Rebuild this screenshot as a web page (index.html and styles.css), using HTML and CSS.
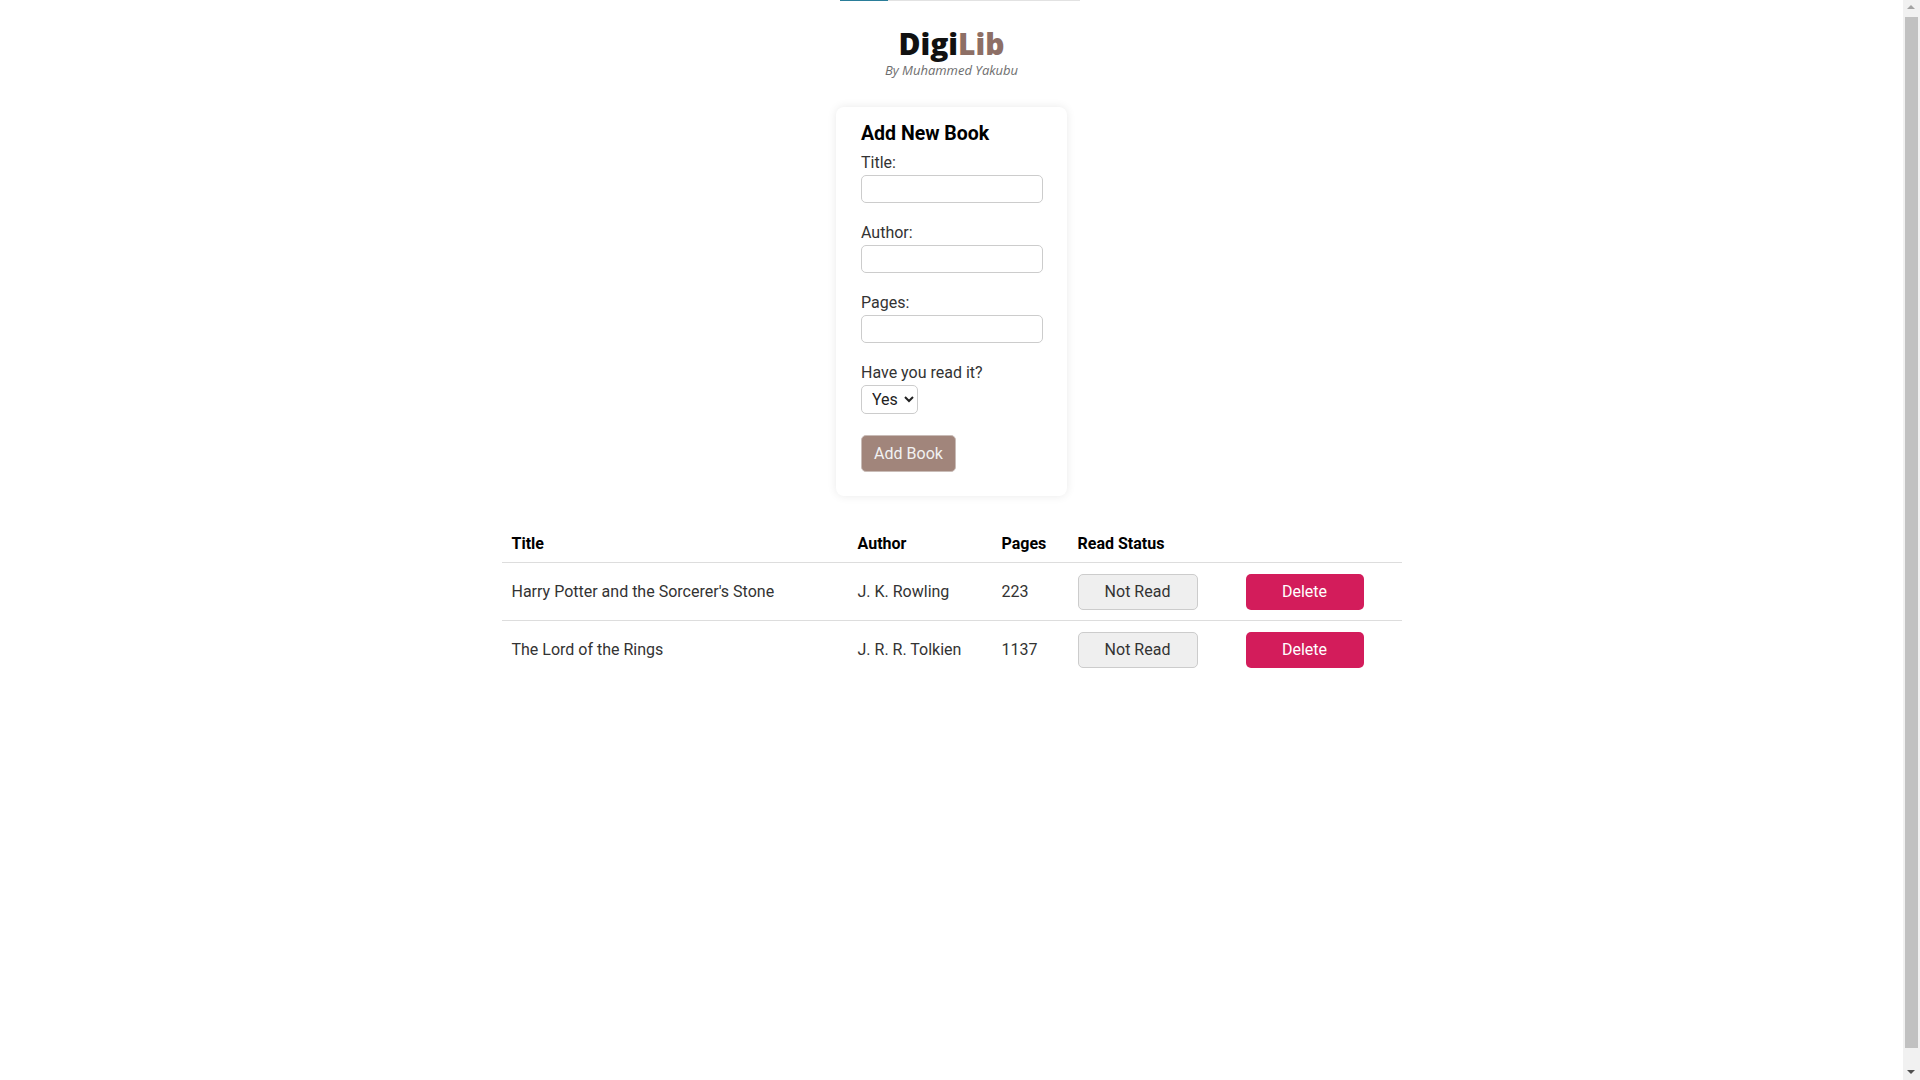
FILE: index.html
```html
<!DOCTYPE html>
<html lang="en">
<head>
<meta charset="utf-8">
<title>DigiLib</title>
<link rel="stylesheet" href="styles.css">
</head>
<body>
<div class="loader"><span class="loader-fill"></span></div>
<header class="site-header">
  <h1 class="logo">Digi<span class="logo-accent">Lib</span></h1>
  <p class="byline">By Muhammed Yakubu</p>
</header>
<main class="main">
  <form class="card">
    <h2 class="card-title">Add New Book</h2>
    <div class="field">
      <label class="label" for="title">Title:</label>
      <input class="input" id="title" type="text">
    </div>
    <div class="field">
      <label class="label" for="author">Author:</label>
      <input class="input" id="author" type="text">
    </div>
    <div class="field">
      <label class="label" for="pages">Pages:</label>
      <input class="input" id="pages" type="text">
    </div>
    <div class="field field-last">
      <label class="label" for="read">Have you read it?</label>
      <select class="select" id="read"><option>Yes</option><option>No</option></select>
    </div>
    <button class="btn-add" type="button">Add Book</button>
  </form>
  <table class="books">
    <colgroup>
      <col class="c-title"><col class="c-author"><col class="c-pages"><col class="c-status"><col class="c-action">
    </colgroup>
    <thead>
      <tr><th>Title</th><th>Author</th><th>Pages</th><th>Read Status</th><th></th></tr>
    </thead>
    <tbody>
      <tr>
        <td>Harry Potter and the Sorcerer's Stone</td>
        <td>J. K. Rowling</td>
        <td>223</td>
        <td><button class="btn-status" type="button">Not Read</button></td>
        <td><button class="btn-delete" type="button">Delete</button></td>
      </tr>
      <tr>
        <td>The Lord of the Rings</td>
        <td>J. R. R. Tolkien</td>
        <td>1137</td>
        <td><button class="btn-status" type="button">Not Read</button></td>
        <td><button class="btn-delete" type="button">Delete</button></td>
      </tr>
    </tbody>
  </table>
</main>
<div class="scrollbar" aria-hidden="true">
  <span class="sb-arrow sb-up"></span>
  <span class="sb-thumb"></span>
  <span class="sb-arrow sb-down"></span>
</div>
</body>
</html>
```
FILE: styles.css
```css
html { background: #fff; }
body {
  margin: 8px 25px 8px 8px;
  min-height: 100vh;
  font-family: Roboto, "Liberation Sans", sans-serif;
  font-size: 16px;
  color: #333;
  background: #fff;
}
.loader {
  position: absolute;
  top: 0;
  left: 840px;
  width: 240px;
  height: 1px;
  background: #e2e2e2;
}
.loader-fill {
  display: block;
  width: 48px;
  height: 100%;
  background: #2a7d99;
}
.site-header {
  padding-top: 18px;
  text-align: center;
}
.logo {
  margin: 0;
  font-family: "Open Sans", sans-serif;
  font-weight: 800;
  font-size: 30px;
  line-height: 36px;
  color: #111;
}
.logo-accent { color: #8d6f66; }
.byline {
  margin: 0;
  font-family: "Open Sans", sans-serif;
  font-style: italic;
  font-size: 13px;
  line-height: 16px;
  color: #6e6e6e;
}
.main {
  display: flex;
  flex-direction: column;
  align-items: center;
  margin-top: 29px;
}
.card {
  display: flex;
  flex-direction: column;
  width: 182px;
  padding: 15px 24px 24px 25px;
  background: #fff;
  border-radius: 8px;
  box-shadow: 0 0 10px rgba(0, 0, 0, 0.09);
}
.card-title {
  margin: 0 0 8px;
  font-size: 19.5px;
  line-height: 23px;
  font-weight: 700;
  color: #000;
}
.field {
  display: flex;
  flex-direction: column;
  align-items: flex-start;
  gap: 2px;
  margin-bottom: 20px;
}
.field-last { margin-bottom: 21px; }
.label {
  line-height: 20px;
  color: #333;
}
.input {
  box-sizing: border-box;
  width: 182px;
  height: 28px;
  border: 1px solid #ccc;
  border-radius: 5px;
  padding: 0 6px;
  font: inherit;
}
.select {
  box-sizing: border-box;
  width: 57px;
  height: 29px;
  border: 1px solid #ccc;
  border-radius: 5px;
  background: #fff;
  font: inherit;
  color: #222;
  padding: 0 2px 0 6px;
}
.btn-add {
  align-self: flex-start;
  width: 95px;
  height: 37px;
  box-sizing: border-box;
  border: 1px solid #c9bcb7;
  border-radius: 5px;
  background: #a1857b;
  color: #f2f2f2;
  font: inherit;
}
.books {
  width: 900px;
  margin-top: 26px;
  border-collapse: collapse;
  table-layout: fixed;
}
.c-title { width: 346px; }
.c-author { width: 144px; }
.c-pages { width: 76px; }
.c-status { width: 168px; }
.c-action { width: 166px; }
.books th {
  padding: 12px 10px 8px;
  text-align: left;
  font-weight: 700;
  line-height: 20px;
  color: #000;
  border-bottom: 1px solid #ddd;
}
.books td {
  padding: 11px 10px 10px;
  line-height: 20px;
  color: #333;
}
.books tbody tr:not(:last-child) td { border-bottom: 1px solid #ddd; }
.btn-status {
  width: 120px;
  height: 36px;
  border: 1px solid #ccc;
  border-radius: 5px;
  background: #efefef;
  color: #333;
  font: inherit;
}
.btn-delete {
  width: 118px;
  height: 36px;
  border: none;
  border-radius: 5px;
  background: #d31c5b;
  color: #fff;
  font: inherit;
}
.scrollbar {
  position: fixed;
  top: 0;
  right: 0;
  width: 17px;
  height: 100vh;
  background: #f1f1f1;
}
.sb-thumb {
  position: absolute;
  top: 17px;
  bottom: 32px;
  left: 2px;
  right: 2px;
  background: #c1c1c1;
}
.sb-arrow {
  position: absolute;
  left: 4px;
  width: 0;
  height: 0;
  border-left: 4px solid transparent;
  border-right: 4px solid transparent;
}
.sb-up {
  top: 5px;
  border-bottom: 4px solid #a3a3a3;
}
.sb-down {
  bottom: 6px;
  border-top: 4px solid #505050;
}
```
